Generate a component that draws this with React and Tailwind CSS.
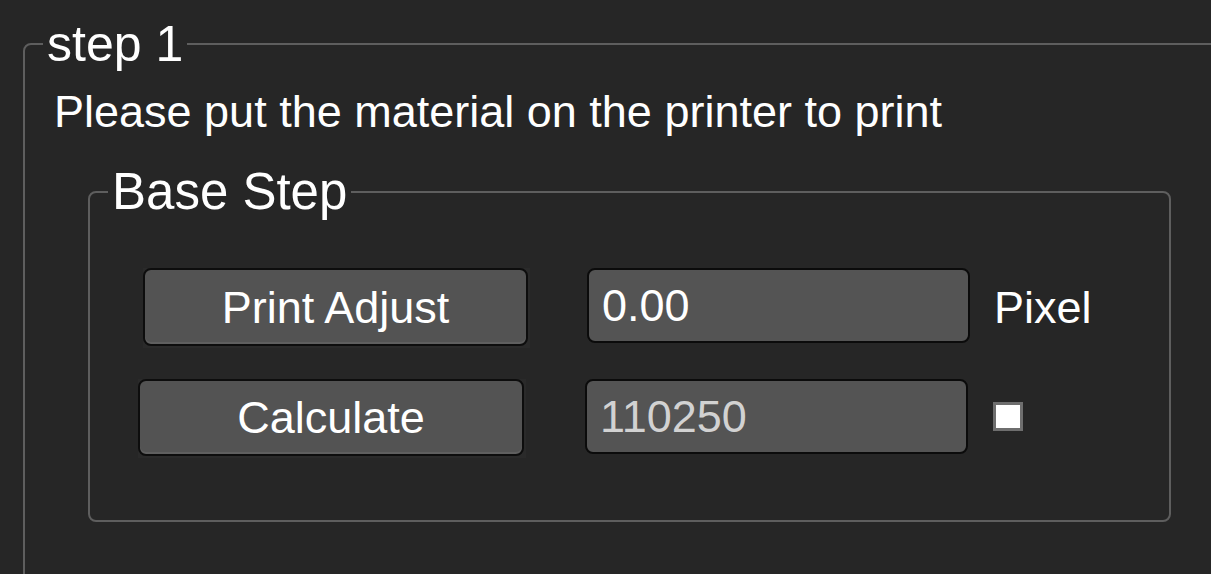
export default function App() {
  return (
    <div className="w-[1211px] h-[574px] overflow-hidden bg-[#262626] text-white font-['Liberation_Sans',Arial,sans-serif]">
      <fieldset className="ml-[23px] mt-[19px] w-[1230px] h-[620px] border-2 border-[#5e5e5e] rounded-[8px]">
        <legend className="ml-[18px] px-[4px] text-[50px] leading-[50px]">step 1</legend>
        <p className="mt-[20px] ml-[29px] text-[45px] leading-[45px]">
          Please put the material on the printer to print
        </p>
        <fieldset className="mt-[33px] ml-[63px] w-[1083px] pb-[62px] border-2 border-[#5e5e5e] rounded-[8px]">
          <legend className="ml-[18px] px-[4px] text-[51px] leading-[50px]">Base Step</legend>

          <div className="mt-[51px] ml-[53px] flex items-start">
            <div className="bg-[#2a2a2a] pr-[2px] pb-[2px]">
              <button className="w-[385px] h-[78px] rounded-[8px] border-2 border-[#0d0d0d] bg-[#535353] shadow-[inset_0_-2px_0_#5f5f5f] text-[45px] leading-none text-white">
                Print Adjust
              </button>
            </div>
            <div className="ml-[57px] w-[383px] h-[75px] rounded-[8px] border-2 border-[#0b0b0b] bg-[#545454] flex items-center pl-[13px] text-[45px] leading-none text-white">
              0.00
            </div>
            <div className="ml-[24px] self-center mt-[-2px] text-[45px] leading-none">Pixel</div>
          </div>

          <div className="mt-[31px] ml-[48px] flex items-start">
            <div className="bg-[#2a2a2a] pr-[2px] pb-[2px]">
              <button className="w-[386px] h-[77px] rounded-[8px] border-2 border-[#0d0d0d] bg-[#535353] shadow-[inset_0_-2px_0_#5f5f5f] text-[45px] leading-none text-white">
                Calculate
              </button>
            </div>
            <div className="ml-[59px] w-[383px] h-[75px] rounded-[8px] border-2 border-[#0b0b0b] bg-[#545454] flex items-center pl-[13px] text-[45px] leading-none text-[#d2d2d2]">
              110250
            </div>
            <div className="ml-[25px] mt-[23px] w-[30px] h-[29px] border-[3px] border-[#6e6e6e] bg-white" />
          </div>
        </fieldset>
      </fieldset>
    </div>
  );
}
